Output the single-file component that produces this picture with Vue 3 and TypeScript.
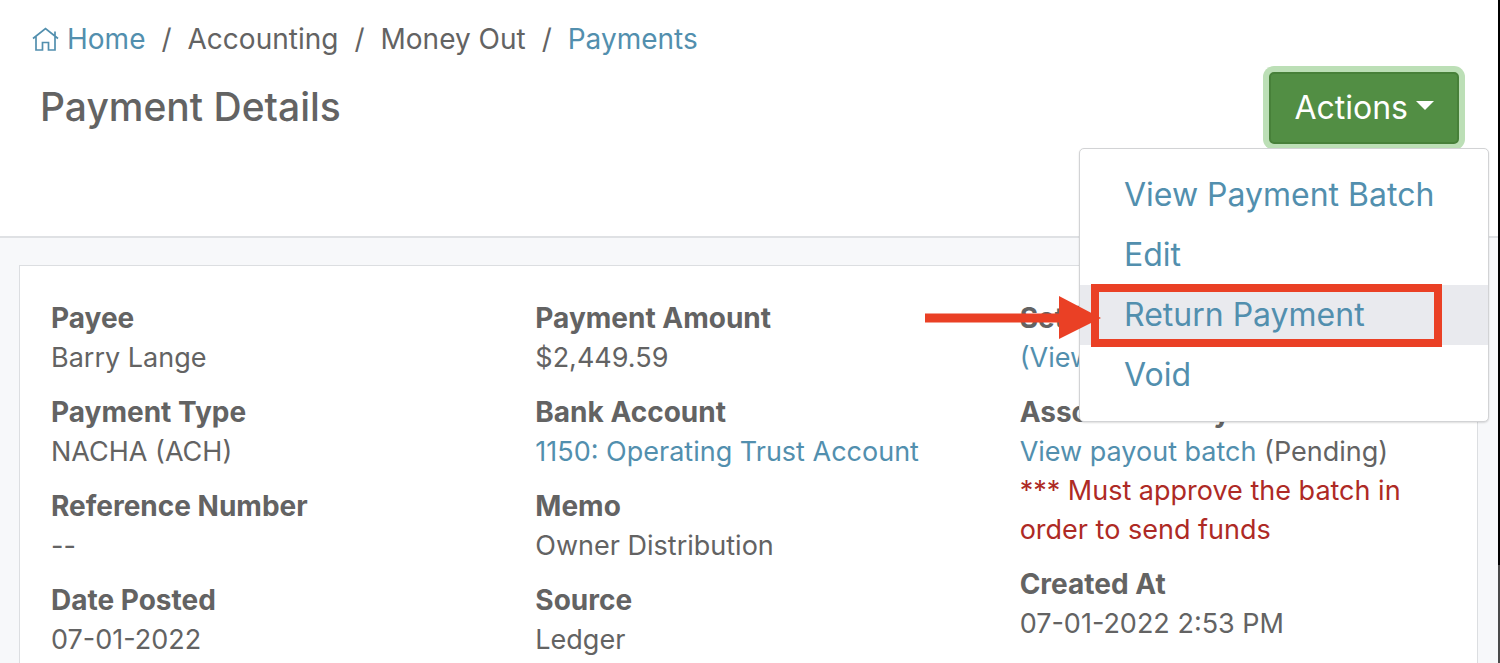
<script setup lang="ts">
import { ref } from 'vue'

interface Field {
  label: string
  value: string
  href?: string
  note?: string
  warning?: string
}

const columns: Field[][] = [
  [
    { label: 'Payee', value: 'Barry Lange' },
    { label: 'Payment Type', value: 'NACHA (ACH)' },
    { label: 'Reference Number', value: '--' },
    { label: 'Date Posted', value: '07-01-2022' },
  ],
  [
    { label: 'Payment Amount', value: '$2,449.59' },
    { label: 'Bank Account', value: '1150: Operating Trust Account', href: '#account' },
    { label: 'Memo', value: 'Owner Distribution' },
    { label: 'Source', value: 'Ledger' },
  ],
  [
    { label: 'Settings', value: '(View)', href: '#settings' },
    {
      label: 'Associated Payout Batch',
      value: 'View payout batch',
      href: '#batch',
      note: '(Pending)',
      warning: '*** Must approve the batch in order to send funds',
    },
    { label: 'Created At', value: '07-01-2022 2:53 PM' },
  ],
]

const actions = ['View Payment Batch', 'Edit', 'Return Payment', 'Void']
const highlighted = 'Return Payment'
const open = ref(true)
</script>

<template>
  <div class="page">
    <header class="top">
      <nav class="crumbs" aria-label="Breadcrumb">
        <a href="#home" class="home">
          <svg viewBox="0 0 28 24" width="28" height="24" aria-hidden="true">
            <path d="M1 11.500 13.500 1.500 26 11.500M4 9.500V23H10.500V15.500H16.500V23H23V4.500" />
          </svg>
          Home
        </a>
        <span>/</span>
        <span>Accounting</span>
        <span>/</span>
        <span>Money Out</span>
        <span>/</span>
        <a href="#payments">Payments</a>
      </nav>
      <div class="heading">
        <h1>Payment Details</h1>
        <div class="dropdown">
          <button type="button" class="toggle" :aria-expanded="open" @click="open = !open">
            Actions<span class="caret"></span>
          </button>
          <ul v-if="open" class="menu">
            <li v-for="a in actions" :key="a" :class="{ active: a === highlighted }">
              <button type="button" class="item">{{ a }}</button>
              <template v-if="a === highlighted">
                <span class="frame"></span>
                <svg class="arrow" viewBox="0 0 176 44" width="176" height="44" aria-hidden="true">
                  <path d="M0 17.500H134V0L176 22 134 43V26.500H0Z" />
                </svg>
              </template>
            </li>
          </ul>
        </div>
      </div>
    </header>
    <main>
      <section class="card">
        <dl v-for="(col, i) in columns" :key="i">
          <div v-for="f in col" :key="f.label" class="field">
            <dt>{{ f.label }}</dt>
            <dd>
              <a v-if="f.href" :href="f.href">{{ f.value }}</a>
              <template v-else>{{ f.value }}</template>
              {{ f.note }}
            </dd>
            <dd v-if="f.warning" class="warning">{{ f.warning }}</dd>
          </div>
        </dl>
      </section>
    </main>
  </div>
</template>

<style>
body {
  margin: 0;
  background: #f7f8fa;
}
</style>

<style scoped>
.page {
  box-sizing: border-box;
  display: flex;
  flex-direction: column;
  min-height: 100vh;
  border-right: 2px solid #000;
  border-image: linear-gradient(#000 85%, #4a4a4a 85%) 2;
  background: #f7f8fa;
  color: #636363;
  font: 27px/39px Inter, 'Liberation Sans', sans-serif;
}
a {
  color: #528fae;
  text-decoration: none;
}
.top {
  height: 236px;
  background: #fff;
  border-bottom: 2px solid #dfe1e4;
}
.crumbs {
  display: flex;
  gap: 16px;
  padding: 19px 32px 0;
  font-size: 28px;
  line-height: 40px;
}
.home {
  display: flex;
  align-items: center;
  gap: 7px;
}
.home svg {
  fill: none;
  stroke: #528fae;
  stroke-width: 1.7;
}
.heading {
  display: flex;
  justify-content: space-between;
  padding: 13px 39px 0 40px;
}
h1 {
  margin: 0;
  padding-top: 11px;
  font-size: 39px;
  line-height: 48px;
  font-weight: 500;
}
.dropdown {
  position: relative;
}
.toggle {
  display: flex;
  align-items: center;
  gap: 8px;
  height: 72px;
  padding: 0 23px;
  border: 2px solid #478039;
  border-radius: 5px;
  background: #528e44;
  box-shadow: 0 0 0 6px #bcdfb6;
  color: #fff;
  font: 32px/40px Inter, 'Liberation Sans', sans-serif;
}
.caret {
  margin-bottom: 6px;
  border: 9px solid transparent;
  border-top-color: #fff;
  border-bottom: 0;
}
.menu {
  position: absolute;
  z-index: 2;
  top: 76px;
  right: -30px;
  width: 408px;
  margin: 0;
  padding: 16px 0;
  list-style: none;
  background: #fff;
  border: 1px solid #d2d3d5;
  border-radius: 5px;
  box-shadow: 0 1px 2px #0002;
}
.menu li {
  position: relative;
}
.active {
  background: #e9eaee;
}
.item {
  display: block;
  width: 100%;
  padding: 10px 44px;
  border: 0;
  background: none;
  color: #528fae;
  text-align: left;
  white-space: nowrap;
  font: 32px/40px Inter, 'Liberation Sans', sans-serif;
}
.frame {
  position: absolute;
  inset: -1px 46px -2px 11px;
  border: 8px solid #ea4025;
  pointer-events: none;
}
.arrow {
  position: absolute;
  top: 11px;
  left: -155px;
  fill: #ea4025;
}
main {
  display: flex;
  flex: 1;
  padding: 27px 20px 0 19px;
}
.card {
  display: grid;
  flex: 1;
  grid-template-columns: repeat(3, 1fr);
  gap: 60px;
  padding: 32px 33px 0 31px;
  background: #fff;
  border: 1px solid #dcdee1;
  border-bottom: 0;
}
dl {
  margin: 0;
}
.field + .field {
  margin-top: 15px;
}
dt {
  font-size: 28px;
  line-height: 40px;
  font-weight: 700;
  white-space: nowrap;
}
dd {
  margin: 0;
}
.warning {
  color: #ae2a25;
}
</style>
